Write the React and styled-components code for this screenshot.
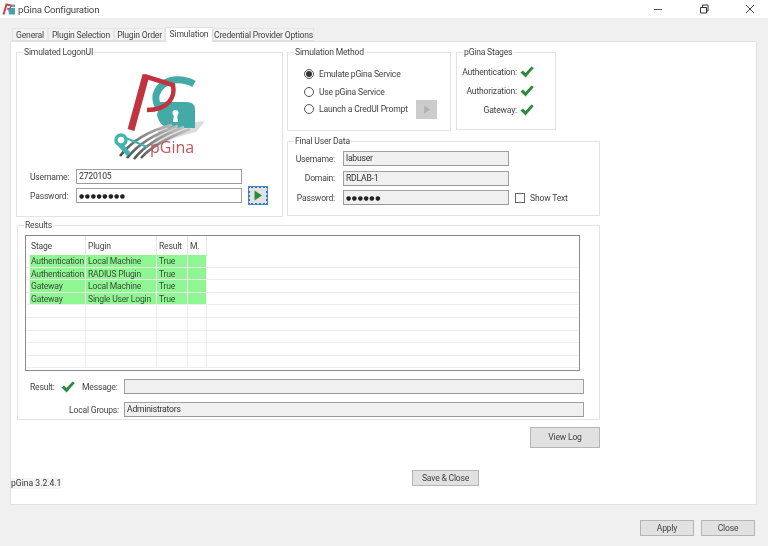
import React from "react";
import styled, { createGlobalStyle } from "styled-components";

const Global = createGlobalStyle`
  html, body { margin: 0; padding: 0; background: #f0f0f0; }
  body { font-family: Roboto, "Open Sans", "Liberation Sans", sans-serif; font-size: 8.6px; letter-spacing: -0.2px; color: #333; }
`;
const Win = styled.div`width: 768px; height: 546px; overflow: hidden; display: flex; flex-direction: column; background: #f0f0f0; position: relative; filter: blur(0.3px);`;
const TitleBar = styled.div`height: 18px; background: #fff; display: flex; align-items: center; padding-left: 2px; flex: none;`;
const TitleText = styled.span`font-size: 9.6px; color: #444; margin-left: 2px;`;
const WinBtns = styled.div`margin-left: auto; display: flex; width: 102px; justify-content: space-between; padding-right: 13px; align-items: center;`;
const Tabs = styled.div`display: flex; align-items: flex-end; height: 23px; padding-left: 12px; flex: none; position: relative; z-index: 1;`;
const Tab = styled.div`
  height: ${p => (p.$active ? 15 : 13)}px; width: ${p => p.$w}px; line-height: ${p => (p.$active ? 12 : 13)}px;
  text-align: center; white-space: nowrap; color: #444;
  background: ${p => (p.$active ? "#fff" : "#f2f2f2")};
  border: 1px solid ${p => (p.$active ? "#e0e0e0" : "#e6e6e6")}; border-bottom: ${p => (p.$active ? "none" : "1px solid #e0e0e0")};
  box-sizing: border-box; margin-bottom: ${p => (p.$active ? -1 : 0)}px;
`;
const Panel = styled.div`
  margin-left: 10px; width: 747px; height: 464px; flex: none; box-sizing: border-box; background: #fff;
  border: 1px solid #e2e2e2; padding: 10px 0 0 5px; display: flex; flex-direction: column;
`;
const TopRow = styled.div`display: flex; gap: 4px;`;
const Group = styled.div`
  position: relative; box-sizing: border-box; width: ${p => p.$w}px; height: ${p => p.$h}px; border: 1px solid #e3e3e3; flex: none;
`;
const Legend = styled.span`position: absolute; top: -6px; left: 6px; background: #fff; padding: 0 1px; line-height: 11px; color: #444; white-space: nowrap;`;
const LogonGroup = styled(Group)`padding-top: 15px; display: flex; flex-direction: column; align-items: center;`;
const LogoWrap = styled.div`width: 100px; height: 95px; margin-left: 21px; flex: none;`;
const LogonForm = styled.div`
  align-self: flex-start; margin: 6px 0 0 13px; display: grid; grid-template-columns: 46px 166px 20px; column-gap: 0; row-gap: 4px; grid-auto-rows: 15px; align-items: center;
`;
const Label = styled.span`color: #444; white-space: nowrap; text-align: ${p => p.$right ? "right" : "left"};`;
const Input = styled.div`
  box-sizing: border-box; height: 15px; line-height: 13px; padding-left: 2px; color: #333; white-space: nowrap; overflow: hidden;
  width: ${p => p.$w ? p.$w + "px" : "auto"};
  background: ${p => (p.$disabled ? "#f0f0f0" : "#fff")};
  border: 1px solid #a0a0a0; border-bottom-color: #999;
`;
const Dots = styled.span`font-size: 6px; letter-spacing: 0.6px; color: #222; font-family: "DejaVu Sans", sans-serif; line-height: 13px; display: block;`;
const RunBtn = styled.div`
  width: 20px; height: 19px; box-sizing: border-box; margin-left: 6px; background: #e2e2e2; border: 2px dotted #2a6fc0; outline: 1px solid #3d86d6; outline-offset: -1px;
  display: flex; align-items: center; justify-content: center;
`;
const Right = styled.div`display: flex; flex-direction: column; gap: 10px;`;
const RightTop = styled.div`display: flex; gap: 5px;`;
const MethodGroup = styled(Group)`padding: 15px 0 0 16px; display: flex; flex-direction: column; gap: 5px;`;
const RadioRow = styled.div`display: flex; align-items: center; height: 12.5px; color: #444; white-space: nowrap; position: relative;`;
const Radio = styled.span`
  width: 10px; height: 10px; box-sizing: border-box; border-radius: 50%; border: 1px solid #555; margin-right: 5px; background: #fff; display: inline-flex; align-items: center; justify-content: center; flex: none;
  &::after { content: ""; display: ${p => (p.$on ? "block" : "none")}; width: 6px; height: 6px; background: #333; border-radius: 50%; }
`;
const DisabledPlay = styled.div`position: absolute; left: 112px; top: -3px; width: 21px; height: 19px; background: #ccc; display: flex; align-items: center; justify-content: center;`;
const StagesGroup = styled(Group)`padding: 12px 0 0 0; display: flex; flex-direction: column; gap: 5px;`;
const StageRow = styled.div`display: flex; justify-content: flex-end; align-items: center; height: 14px; width: 77px; color: #444; white-space: nowrap; gap: 3px;`;
const FinalGroup = styled(Group)`padding-top: 9px; display: grid; grid-template-columns: 47px 166px auto; column-gap: 8px; row-gap: 4.5px; grid-auto-rows: 15px; align-items: center;`;
const ShowText = styled.div`display: flex; align-items: center; margin-left: -2px; gap: 5px; color: #444; white-space: nowrap;`;
const Checkbox = styled.span`width: 10px; height: 10px; box-sizing: border-box; border: 1px solid #666; background: #fff; display: block;`;
const ResultsGroup = styled(Group)`margin: 8px 0 0 1px; padding: 9px 0 0 7px;`;
const Table = styled.div`
  width: 555px; height: 136px; box-sizing: border-box; border: 1px solid #8c8c8c; border-top-color: #888; overflow: hidden; background: #fff;
`;
const Cols = "60px 71px 31px 19px 1fr";
const HeadRow = styled.div`display: grid; grid-template-columns: ${Cols}; height: 19px; line-height: 20px; color: #444;`;
const HeadCell = styled.div`padding-left: ${p => p.$first ? 5 : 2}px; border-right: 1px solid #e8e8e8; white-space: nowrap; overflow: hidden; &:last-child { border-right: none; }`;
const Row = styled.div`display: grid; grid-template-columns: ${Cols}; height: 12.6px; line-height: 13px; box-sizing: border-box; border-bottom: 1px solid #eee;`;
const Cell = styled.div`
  padding-left: 2px; white-space: nowrap; color: #3a4a3a; overflow: hidden; border-right: ${p => p.$last ? "none" : "1px solid #eee"};
  background: ${p => p.$green ? "#8ff792" : "transparent"};
`;
const FirstCell = styled(Cell)`margin-left: 4px; padding-left: 1px;`;
const ResultLine = styled.div`display: flex; align-items: center; height: 15px; margin-top: ${p => p.$mt}px;`;
const ResultLabel = styled.span`width: 31px; margin-left: 5px; color: #444;`;
const MsgLabel = styled.span`color: #444; margin-left: 7px; width: 42px; flex: none;`;
const GroupsLabel = styled.span`color: #444; width: 94px; text-align: right; margin-right: 5px; flex: none;`;
const FlatBtn = styled.div`
  box-sizing: border-box; background: #e1e1e1; border: 1px solid #b5b5b5; color: #444; text-align: center; white-space: nowrap;
  width: ${p => p.$w}px; height: ${p => p.$h}px; line-height: ${p => p.$h - 2}px; flex: none;
`;
const LogRow = styled.div`display: flex; justify-content: flex-end; width: 584px; margin-top: 7px;`;
const BottomRow = styled.div`display: grid; grid-template-columns: 401px 67px; margin-left: -5px; margin-top: 22px; align-items: end;`;
const Version = styled.span`letter-spacing: 0; color: #333; background: #f4f4f4; width: max-content; position: relative; top: 3px; line-height: 11px;`;
const Footer = styled.div`display: flex; justify-content: flex-end; gap: 7px; padding: 15px 13px 0 0;`;

const Check = ({ w = 14, h = 12 }) => (
  <svg width={w} height={h} viewBox="0 0 14 12"><path d="M0.5 6.5 L3 4.5 L5.5 7 L11.5 0.5 L13.8 2 L5.6 11.5 Z" fill="#2e8b3d" /></svg>
);
const Play = ({ c, s = 10 }) => (<svg width={s} height={s + 1} viewBox="0 0 10 11"><path d="M1.5 0.5 L9 5.5 L1.5 10.5 Z" fill={c} /></svg>);

const AppIcon = () => (
  <svg width="14" height="13" viewBox="0 0 14 13">
    <path d="M1.500 11.500 L4.500 1.500 L9 2.500" fill="none" stroke="#c9414a" strokeWidth="2" />
    <path d="M6 5 H13 V11.500 H7 Z" fill="#4c9fb0" />
    <path d="M8 1.500 H13 V4 H9 Z" fill="#5aa9b8" />
    <path d="M9 2.500 Q9 6 5 6" fill="none" stroke="#c9414a" strokeWidth="1.300" />
  </svg>
);

const Logo = () => (
  <svg width="100" height="95" viewBox="110 65 100 95">
    <defs>
      <linearGradient id="shade" x1="0" y1="1" x2="1" y2="0"><stop offset="0" stopColor="#444" /><stop offset="1" stopColor="#ccc" /></linearGradient>
    </defs>
    <path d="M160 124 Q182 120 205 118 L196 129 Q170 135 150 146 Z" fill="#dcdcdc" />
    <path d="M160 99 L186 99 Q195 99 195 106 V125 H172 Q160 125 157 112 Z" fill="#43aaa8" />
    <path d="M194 81 Q185 76 174 77 Q160 79 156 92 Q155 100 160 106" fill="none" stroke="#43aaa8" strokeWidth="7" />
    <path d="M146 72 L131 127" fill="none" stroke="#c1333f" strokeWidth="7" />
    <path d="M144 73 L173 82 Q175 92 169 99 Q162 107 147 107" fill="none" stroke="#c1333f" strokeWidth="4.500" />
    <circle cx="175.500" cy="110" r="3" fill="#fff" />
    <path d="M174 111 H177 L178 119 H173 Z" fill="#fff" />
    <path d="M120 153 Q138 130 172 122 M127 155 Q144 134 178 123 M134 156 Q149 137 184 124 M141 155 Q154 140 190 126" fill="none" stroke="url(#shade)" strokeWidth="2.600" />
    <circle cx="121" cy="137" r="5" fill="none" stroke="#40b5b0" strokeWidth="3.500" />
    <path d="M123 141 L131 150 L127 153 L118 143 Z" fill="#40b5b0" />
    <path d="M126 135 L147 144" stroke="#40b5b0" strokeWidth="2" />
    <text x="150" y="150" fontFamily="'Open Sans', sans-serif" fontSize="16" letterSpacing="0" fill="#c4555e">pGina</text>
  </svg>
);

const rows = [
  ["Authentication", "Local Machine", "True"],
  ["Authentication", "RADIUS Plugin", "True"],
  ["Gateway", "Local Machine", "True"],
  ["Gateway", "Single User Login", "True"],
  [], [], [], [], [],
];

export default function App() {
  return (
    <Win>
      <Global />
      <TitleBar>
        <AppIcon />
        <TitleText>pGina Configuration</TitleText>
        <WinBtns>
          <svg width="10" height="10" viewBox="0 0 10 10"><path d="M1 5.500 H9" stroke="#555" /></svg>
          <svg width="10" height="10" viewBox="0 0 10 10"><path d="M1.500 3.500 H7.500 V9 H1.500 Z M3.500 3 V1 H9 V7 H8" fill="none" stroke="#333" /></svg>
          <svg width="10" height="10" viewBox="0 0 10 10"><path d="M1 1 L9 9 M9 1 L1 9" stroke="#444" /></svg>
        </WinBtns>
      </TitleBar>
      <Tabs>
        <Tab $w={36}>General</Tab>
        <Tab $w={66}>Plugin Selection</Tab>
        <Tab $w={51}>Plugin Order</Tab>
        <Tab $w={48} $active>Simulation</Tab>
        <Tab $w={101}>Credential Provider Options</Tab>
      </Tabs>
      <Panel>
        <TopRow>
          <LogonGroup $w={267} $h={165}>
            <Legend>Simulated LogonUI</Legend>
            <LogoWrap><Logo /></LogoWrap>
            <LogonForm>
              <Label>Username:</Label>
              <Input>2720105</Input>
              <span />
              <Label>Password:</Label>
              <Input><Dots>●●●●●●●●</Dots></Input>
              <RunBtn><Play c="#2e8b3d" s={10} /></RunBtn>
            </LogonForm>
          </LogonGroup>
          <Right>
            <RightTop>
              <MethodGroup $w={164} $h={79}>
                <Legend>Simulation Method</Legend>
                <RadioRow><Radio $on />Emulate pGina Service</RadioRow>
                <RadioRow><Radio />Use pGina Service</RadioRow>
                <RadioRow><Radio />Launch a CredUI Prompt<DisabledPlay><Play c="#b0b0b0" s={8} /></DisabledPlay></RadioRow>
              </MethodGroup>
              <StagesGroup $w={100} $h={78}>
                <Legend>pGina Stages</Legend>
                <StageRow>Authentication:<Check /></StageRow>
                <StageRow>Authorization:<Check /></StageRow>
                <StageRow>Gateway:<Check /></StageRow>
              </StagesGroup>
            </RightTop>
            <FinalGroup $w={313} $h={75}>
              <Legend>Final User Data</Legend>
              <Label $right>Username:</Label>
              <Input $disabled>labuser</Input>
              <span />
              <Label $right>Domain:</Label>
              <Input $disabled>RDLAB-1</Input>
              <span />
              <Label $right>Password:</Label>
              <Input $disabled><Dots>●●●●●●</Dots></Input>
              <ShowText><Checkbox />Show Text</ShowText>
            </FinalGroup>
          </Right>
        </TopRow>
        <ResultsGroup $w={583} $h={195}>
          <Legend>Results</Legend>
          <Table>
            <HeadRow>
              <HeadCell $first>Stage</HeadCell><HeadCell>Plugin</HeadCell><HeadCell>Result</HeadCell><HeadCell>M.</HeadCell><HeadCell />
            </HeadRow>
            {rows.map((r, i) => {
              const g = r.length > 0;
              return (
                <Row key={i}>
                  <FirstCell $green={g}>{r[0]}</FirstCell>
                  <Cell $green={g}>{r[1]}</Cell>
                  <Cell $green={g}>{r[2]}</Cell>
                  <Cell $green={g} />
                  <Cell $last />
                </Row>
              );
            })}
          </Table>
          <ResultLine $mt={8}>
            <ResultLabel>Result:</ResultLabel>
            <Check />
            <MsgLabel>Message:</MsgLabel>
            <Input $disabled $w={460} />
          </ResultLine>
          <ResultLine $mt={8}>
            <GroupsLabel>Local Groups:</GroupsLabel>
            <Input $disabled $w={460}>Administrators</Input>
          </ResultLine>
        </ResultsGroup>
        <LogRow><FlatBtn $w={70} $h={21}>View Log</FlatBtn></LogRow>
        <BottomRow>
          <Version>pGina 3.2.4.1</Version>
          <FlatBtn $w={67} $h={16}>Save &amp; Close</FlatBtn>
        </BottomRow>
      </Panel>
      <Footer>
        <FlatBtn $w={54} $h={16}>Apply</FlatBtn>
        <FlatBtn $w={54} $h={16}>Close</FlatBtn>
      </Footer>
    </Win>
  );
}
